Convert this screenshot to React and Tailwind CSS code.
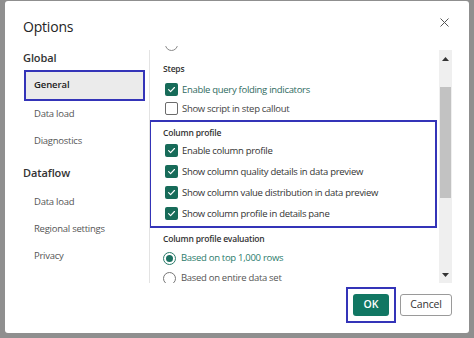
import React from "react";

const F = { fontFamily: '"Open Sans", "Noto Sans", sans-serif' };

function Check({ checked }) {
  if (checked) {
    return (
      <span className="w-[13px] h-[13px] rounded-[2px] bg-[#176b59] flex items-center justify-center shrink-0">
        <svg width="9" height="9" viewBox="0 0 10 10">
          <path d="M1.8 5.2 L4 7.3 L8.3 2.8" fill="none" stroke="white" strokeWidth="1.3" strokeLinecap="round" strokeLinejoin="round" />
        </svg>
      </span>
    );
  }
  return <span className="w-[13px] h-[13px] rounded-[2px] border border-[#6b6b6b] bg-white shrink-0" />;
}

function CheckRow({ checked, label, h = "h-[19px]", color = "text-[#333]" }) {
  return (
    <div className={`${h} ml-[2px] flex items-center gap-[4px]`}>
      <Check checked={checked} />
      <span className={`text-[9.5px] leading-[14px] tracking-[-0.3px] ${color} whitespace-nowrap`}>{label}</span>
    </div>
  );
}

function Radio({ selected, label }) {
  return (
    <div className="h-[20px] flex items-center gap-[5px]">
      {selected ? (
        <span className="w-[13px] h-[13px] rounded-full border border-[#2a7a69] flex items-center justify-center shrink-0">
          <span className="w-[7px] h-[7px] rounded-full bg-[#1d7262]" />
        </span>
      ) : (
        <span className="w-[13px] h-[13px] rounded-full border border-[#777] shrink-0" />
      )}
      <span className={`text-[9.5px] leading-[14px] tracking-[-0.3px] whitespace-nowrap ${selected ? "text-[#2c7c6c]" : "text-[#555]"}`}>{label}</span>
    </div>
  );
}

function NavItem({ children }) {
  return <div className="h-[27px] flex items-center pl-[29px] text-[9.5px] tracking-[-0.25px] text-[#555] whitespace-nowrap">{children}</div>;
}

export default function App() {
  return (
    <div className="w-[474px] h-[338px] bg-[#8f8f8f] pl-[5px] pt-[1px] overflow-hidden" style={F}>
      <div className="w-[464px] h-[332px] bg-white rounded-[3px] flex flex-col">
        {/* header */}
        <div className="h-[45px] flex justify-between">
          <div className="pl-[18px] pt-[16px] text-[14px] leading-[20px] tracking-[-0.2px] text-[#242424]">Options</div>
          <div className="pr-[20px] pt-[17px]">
            <svg width="9" height="9" viewBox="0 0 9 9">
              <path d="M0.5 0.5 L8.5 8.5 M8.5 0.5 L0.5 8.5" stroke="#555" strokeWidth="1" />
            </svg>
          </div>
        </div>

        {/* body */}
        <div className="h-[237px] flex">
          <div className="w-[144px] pt-[4px] flex flex-col">
            <div className="pl-[18px] text-[11px] leading-[16px] tracking-[-0.1px] font-semibold text-[#333]">Global</div>
            <div className="mt-[4px] ml-[19px] w-[121px] h-[31px] border-2 border-[#3434b8] bg-[#ebebeb] flex items-center pl-[8px] text-[9.5px] tracking-[-0.1px] font-semibold text-[#222]">
              General
            </div>
            <NavItem>Data load</NavItem>
            <NavItem>Diagnostics</NavItem>
            <div className="mt-[10px] pl-[18px] text-[11px] leading-[16px] tracking-[-0.1px] font-semibold text-[#333]">Dataflow</div>
            <div className="mt-[8px]">
              <NavItem>Data load</NavItem>
              <NavItem>Regional settings</NavItem>
              <NavItem>Privacy</NavItem>
            </div>
          </div>
          <div className="w-px mt-[4px] bg-[#e3e3e3]" />

          {/* content */}
          <div className="flex-1 overflow-hidden pl-[13px]">
            <div className="-mt-[8px] h-[13px] ml-[2px] flex">
              <span className="w-[13px] h-[13px] rounded-full border border-[#888]" />
            </div>
            <div className="mt-[11px] text-[8.5px] leading-[14px] tracking-[-0.2px] font-semibold text-[#333]">Steps</div>
            <div className="mt-[4px]">
              <CheckRow checked label="Enable query folding indicators" color="text-[#2f6b61]" />
              <CheckRow label="Show script in step callout" color="text-[#444]" />
            </div>
            <div className="mt-[2px] -ml-[14px] w-[288px] h-[108px] border-2 border-[#3434b8] pl-[12px] pt-[4px]">
              <div className="text-[8.5px] leading-[14px] tracking-[-0.2px] font-semibold text-[#333]">Column profile</div>
              <CheckRow h="h-[21px]" checked label="Enable column profile" />
              <CheckRow h="h-[21px]" checked label="Show column quality details in data preview" />
              <CheckRow h="h-[21px]" checked label="Show column value distribution in data preview" />
              <CheckRow h="h-[21px]" checked label="Show column profile in details pane" />
            </div>
            <div className="mt-[4px] text-[8.5px] leading-[14px] tracking-[-0.2px] font-semibold text-[#333]">Column profile evaluation</div>
            <div className="mt-[2px]">
              <Radio selected label="Based on top 1,000 rows" />
              <Radio label="Based on entire data set" />
            </div>
          </div>

          {/* scrollbar */}
          <div className="w-[13px] mt-[4px] bg-[#efefef] flex flex-col items-center mr-[17px]">
            <div className="h-[17px] flex items-center justify-center">
              <svg width="7" height="4" viewBox="0 0 7 4"><path d="M0 4 L3.5 0 L7 4 Z" fill="#333" /></svg>
            </div>
            <div className="h-[20px]" />
            <div className="w-[11px] h-[111px] bg-[#c2c2c2]" />
            <div className="flex-1" />
            <div className="h-[17px] flex items-center justify-center">
              <svg width="7" height="4" viewBox="0 0 7 4"><path d="M0 0 L3.5 4 L7 0 Z" fill="#333" /></svg>
            </div>
          </div>
        </div>

        {/* footer */}
        <div className="h-[50px] flex justify-end items-start pr-[17px] gap-[4px]">
          <div className="mt-[4px] border-2 border-[#3434b8] p-[5px]">
            <button className="w-[36px] h-[22px] rounded-[3px] bg-[#117763] text-white text-[10.5px] font-semibold flex items-center justify-center">
              OK
            </button>
          </div>
          <button className="mt-[11px] w-[52px] h-[22px] rounded-[3px] border border-[#9a9a9a] bg-white text-[#333] text-[10.5px] tracking-[-0.2px] flex items-center justify-center">
            Cancel
          </button>
        </div>
      </div>
    </div>
  );
}
